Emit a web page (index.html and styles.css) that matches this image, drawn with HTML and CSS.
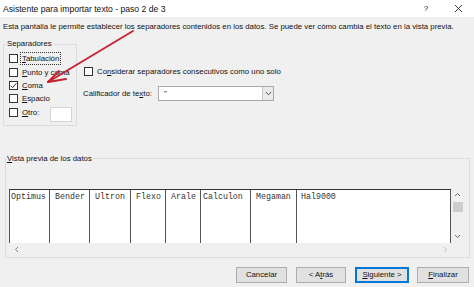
FILE: index.html
```html
<!DOCTYPE html>
<html lang="es">
<head>
<meta charset="utf-8">
<title>Asistente para importar texto</title>
<link rel="stylesheet" href="styles.css">
</head>
<body>
<div class="titlebar">
  <span class="title">Asistente para importar texto - paso 2 de 3</span>
  <span class="help">?</span>
  <span class="close"><svg width="9" height="9" viewBox="0 0 9 9"><path d="M1 1L8 8M8 1L1 8" stroke="#222" stroke-width="0.9" fill="none"/></svg></span>
</div>
<p class="desc">Esta pantalla le permite establecer los separadores contenidos en los datos. Se puede ver cómo cambia el texto en la vista previa.</p>
<div class="top">
  <fieldset class="seps">
    <legend>Separadores</legend>
    <div class="seps-body">
      <div class="row"><span class="cb"></span><span class="lbl focus"><u>T</u>abulación</span></div>
      <div class="row"><span class="cb"></span><span class="lbl"><u>P</u>unto y coma</span></div>
      <div class="row"><span class="cb"><svg width="7" height="7" viewBox="0 0 7 7"><path d="M0.6 3.6L2.6 5.6L6.4 1.2" stroke="#222" stroke-width="0.9" fill="none"/></svg></span><span class="lbl"><u>C</u>oma</span></div>
      <div class="row"><span class="cb"></span><span class="lbl"><u>E</u>spacio</span></div>
      <div class="row"><span class="cb"></span><span class="lbl"><u>O</u>tro:</span><span class="other"></span></div>
    </div>
  </fieldset>
  <div class="opts">
    <div class="row"><span class="cb"></span><span class="lbl">Co<u>n</u>siderar separadores consecutivos como uno solo</span></div>
    <div class="qual">
      <span class="qlbl">Calificador de te<u>x</u>to:</span>
      <span class="select"><span class="val">"</span><span class="drop"><svg width="7" height="5" viewBox="0 0 7 5"><path d="M0.8 1L3.5 3.8L6.2 1" stroke="#444" stroke-width="0.9" fill="none"/></svg></span></span>
    </div>
  </div>
</div>
<fieldset class="preview">
  <legend><u>V</u>ista previa de los datos</legend>
  <div class="pv-body">
    <div class="table-wrap">
      <div class="grid">
        <div class="cell first">Optimus</div>
        <div class="cell">Bender</div>
        <div class="cell">Ultron</div>
        <div class="cell">Flexo</div>
        <div class="cell">Arale</div>
        <div class="cell calc">Calculon</div>
        <div class="cell">Megaman</div>
        <div class="cell last">Hal9000</div>
      </div>
      <div class="vscroll">
        <span class="arr up"><svg width="7" height="5" viewBox="0 0 7 5"><path d="M1 4L3.5 1.5L6 4" stroke="#555" stroke-width="0.9" fill="none"/></svg></span>
        <span class="thumb"></span>
        <span class="spacer"></span>
        <span class="arr down"><svg width="7" height="5" viewBox="0 0 7 5"><path d="M1 1L3.5 3.5L6 1" stroke="#555" stroke-width="0.9" fill="none"/></svg></span>
      </div>
    </div>
    <div class="hscroll">
      <span class="harr"><svg width="5" height="7" viewBox="0 0 5 7"><path d="M4 1L1.5 3.5L4 6" stroke="#777" stroke-width="0.9" fill="none"/></svg></span>
      <span class="harr"><svg width="5" height="7" viewBox="0 0 5 7"><path d="M1 1L3.5 3.5L1 6" stroke="#bbb" stroke-width="0.9" fill="none"/></svg></span>
    </div>
  </div>
</fieldset>
<div class="buttons">
  <span class="btn b-cancel">Cancelar</span>
  <span class="btn b-back">&lt; A<u>t</u>rás</span>
  <span class="btn b-next default"><u>S</u>iguiente &gt;</span>
  <span class="btn b-finish"><u>F</u>inalizar</span>
</div>
<svg class="arrow" width="474" height="287" viewBox="0 0 474 287">
  <g stroke="#c8202c" stroke-width="1.8" fill="none" stroke-linecap="round">
    <path d="M133 31L48 82"/>
    <path d="M48 82L66 79"/>
    <path d="M48 82L59 71"/>
  </g>
</svg>
</body>
</html>
```
FILE: styles.css
```css
* { box-sizing: border-box; }
html, body { margin: 0; padding: 0; }
body {
  width: 474px;
  height: 287px;
  overflow: hidden;
  position: relative;
  background: #f0f0f0;
  color: #111;
  font-family: "Liberation Sans", Arial, sans-serif;
  font-size: 7.8px;
}
u { text-decoration: underline; text-underline-offset: 1px; }

.titlebar {
  height: 17px;
  background: #fff;
  display: flex;
  align-items: center;
  padding-left: 3px;
}
.title { flex: 1; font-size: 8.6px; }
.help, .close {
  width: 32px;
  display: flex;
  justify-content: center;
  align-items: center;
  font-size: 8px;
}

.desc { margin: 0; padding: 4px 3px 0; line-height: 12px; white-space: nowrap; }

.top { display: flex; margin-top: 5px; }

fieldset {
  margin: 0;
  padding: 0;
  border: 1px solid #dcdcdc;
  min-width: 0;
}
legend { padding: 0 1px; line-height: 12px; }

.seps { width: 74px; margin-left: 3px; }
.seps legend { margin-left: 2px; }
.seps-body { padding: 2px 0 6px 5px; }

.row { height: 13.4px; display: flex; align-items: center; }
.cb {
  width: 9px;
  height: 9px;
  border: 1px solid #333;
  background: #fff;
  flex: none;
  display: flex;
  align-items: center;
  justify-content: center;
}
.lbl { margin-left: 2px; padding: 0 1px; line-height: 11px; white-space: nowrap; border: 1px solid transparent; }
.focus { border: 1px dotted #333; }
.other {
  width: 22px;
  height: 15px;
  background: #fff;
  border: 1px solid #d4d4d4;
  margin-left: 9px;
  margin-top: 4px;
}

.opts { margin-left: 7px; padding-top: 27px; }
.qual { display: flex; align-items: center; margin-top: 8px; height: 15px; }
.qlbl { width: 75px; margin-left: -1px; white-space: nowrap; }
.select {
  width: 116px;
  height: 15px;
  background: #fff;
  border: 1px solid #a8a8a8;
  display: flex;
  align-items: center;
}
.val { flex: 1; padding-left: 5px; }
.drop {
  width: 11px;
  height: 13px;
  background: #eaeaea;
  border-left: 1px solid #c8c8c8;
  display: flex;
  align-items: center;
  justify-content: center;
}

.preview { margin: 27px 0 0 5px; width: 465px; }
.preview legend { margin-left: 0; }
.pv-body { padding: 24px 5px 0 3px; }

.table-wrap { display: flex; height: 54px; }
.grid {
  width: 442px;
  display: grid;
  grid-template-columns: 40px 40px 41px 35px 35px 50px 46px 155px;
  border-top: 1px solid #333;
  background: #fff;
}
.cell {
  border-left: 1px solid #555;
  font-family: "Liberation Mono", "Courier New", monospace;
  font-size: 8.3px;
  line-height: 10px;
  padding: 2px 0 0 5px;
  white-space: nowrap;
  color: #333;
}
.cell.first { padding-left: 1px; }
.cell.calc { padding-left: 2px; }
.cell.last { border-right: 1px solid #555; padding-left: 4px; }

.vscroll {
  width: 13px;
  display: flex;
  flex-direction: column;
  align-items: center;
}
.arr { height: 12px; display: flex; align-items: center; justify-content: center; }
.thumb { width: 10px; height: 10px; background: #cdcdcd; margin-top: 1px; }
.spacer { flex: 1; }

.hscroll {
  height: 14px;
  display: flex;
  justify-content: space-between;
  align-items: center;
  padding: 0 16px 0 5px;
}
.harr { display: flex; align-items: center; }

.buttons {
  display: flex;
  justify-content: flex-end;
  margin-top: 9px;
  padding-right: 5px;
}
.btn {
  height: 16px;
  background: #e1e1e1;
  border: 1px solid #adadad;
  display: flex;
  align-items: center;
  justify-content: center;
  white-space: nowrap;
}
.b-cancel { width: 51px; }
.b-back { width: 50px; margin-left: 9px; }
.b-next { width: 54px; margin-left: 9px; }
.b-finish { width: 52px; margin-left: 8px; }
.default { border-color: #0078d7; box-shadow: inset 0 0 0 1px #0078d7; }

.arrow { position: absolute; left: 0; top: 0; pointer-events: none; }
```
